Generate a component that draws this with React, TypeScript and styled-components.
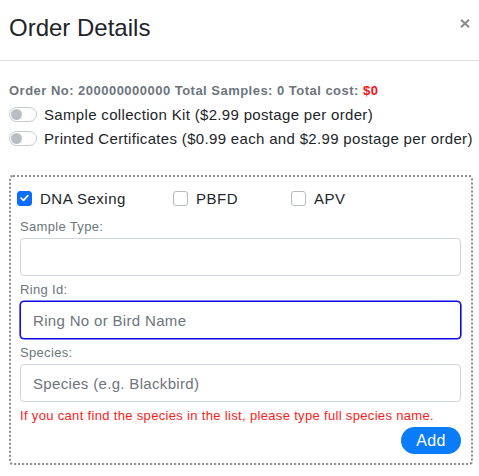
import styled, { createGlobalStyle } from "styled-components";

const GlobalStyle = createGlobalStyle`
    body {
        margin: 0;
        background: #fff;
        font-family: "Liberation Sans", Arial, sans-serif;
        color: #212529;
    }
`

const Modal = styled.div`
    width: 479px;
    background: #fff;
`

const Header = styled.div`
    box-sizing: border-box;
    height: 61px;
    padding: 13px 9px 0;
    border-bottom: 1px solid #dee2e6;
    display: flex;
    justify-content: space-between;
    align-items: flex-start;
`

const Title = styled.h4`
    margin: 0;
    font-size: 24px;
    font-weight: 400;
    line-height: 29px;
    color: #212529;
`

const CloseButton = styled.button`
    border: 0;
    background: none;
    padding: 0;
    margin: 5px 0 0;
    width: 11px;
    height: 10px;
    display: flex;
    align-items: center;
    justify-content: center;
    color: #8a8a8a;
`

const Body = styled.div`
    padding: 22px 6px 0 9px;
    letter-spacing: 0.33px;
`

const Summary = styled.div`
    font-size: 13px;
    line-height: 16px;
    font-weight: 700;
    letter-spacing: 0.48px;
    color: #6c757d;
    margin-bottom: 3px;
    white-space: nowrap;
`

const Cost = styled.span`
    color: #ff1010;
`

const SwitchRow = styled.label`
    display: flex;
    align-items: center;
    gap: 7px;
    height: 24px;
    font-size: 15px;
    color: #212529;
    white-space: nowrap;
`

const Switch = styled.span`
    box-sizing: border-box;
    position: relative;
    width: 28px;
    height: 15px;
    border: 1px solid #c4c8cc;
    border-radius: 8px;
    background: #fff;
    &::after {
        content: "";
        position: absolute;
        left: 1px;
        top: 1px;
        width: 11px;
        height: 11px;
        border-radius: 50%;
        background: #b8bec4;
    }
`

const SampleBox = styled.div`
    margin-top: 25px;
    box-sizing: border-box;
    width: 464px;
    border: 2px dotted #8a8a8a;
    border-radius: 4px;
    padding: 10px 10px 9px 9px;
`

const TestRow = styled.div`
    display: grid;
    grid-template-columns: 156px 118px auto;
    margin-left: -3px;
    height: 22px;
    align-items: center;
    margin-bottom: 10px;
`

const CheckOption = styled.label`
    display: flex;
    align-items: center;
    gap: 8px;
    font-size: 15px;
    letter-spacing: 0.5px;
    color: #212529;
`

const CheckBox = styled.span<{ $checked?: boolean }>`
    box-sizing: border-box;
    width: 15px;
    height: 15px;
    border-radius: 3px;
    border: 1px solid ${props => props.$checked ? "#0d6efd" : "#b5bbc1"};
    background: ${props => props.$checked ? "#0d6efd" : "#fff"};
    display: flex;
    align-items: center;
    justify-content: center;
`

const Field = styled.div`
    margin-bottom: 6px;
`

const FieldLabel = styled.div`
    font-size: 13px;
    line-height: 16px;
    color: #6c757d;
    margin-bottom: 3px;
`

const TextInput = styled.input<{ $focused?: boolean }>`
    box-sizing: border-box;
    display: block;
    width: 441px;
    height: 38px;
    padding: 0 12px;
    font-family: inherit;
    font-size: 15px;
    letter-spacing: 0.33px;
    color: #212529;
    border: 1px solid ${props => props.$focused ? "#0a0ae6" : "#ced4da"};
    box-shadow: ${props => props.$focused ? "0 0 0 0.6px #0a0ae6" : "none"};
    border-radius: 4px;
    outline: none;
    &::placeholder {
        color: #6c757d;
    }
`

const Hint = styled.div`
    font-size: 13px;
    line-height: 16px;
    color: #ff1a1a;
    margin-bottom: 3px;
    white-space: nowrap;
`

const Actions = styled.div`
    display: flex;
    justify-content: flex-end;
    width: 441px;
`

const AddButton = styled.button`
    width: 60px;
    height: 27px;
    border: 0;
    border-radius: 14px;
    background: #0a7cf7;
    color: #fff;
    font-family: inherit;
    font-size: 16px;
    letter-spacing: 0.3px;
    padding: 0;
`

export default function App() {
    const tests = [
        { name: "DNA Sexing", checked: true },
        { name: "PBFD", checked: false },
        { name: "APV", checked: false },
    ];

    return (
        <Modal>
            <GlobalStyle />
            <Header>
                <Title>Order Details</Title>
                <CloseButton aria-label="Close">
                    <svg width="10" height="9" viewBox="0 0 10 9">
                        <path d="M1 0.8L9 8.2M9 0.8L1 8.2" stroke="currentColor" strokeWidth="2" />
                    </svg>
                </CloseButton>
            </Header>
            <Body>
                <Summary>
                    Order No: 200000000000 Total Samples: 0 Total cost: <Cost>$0</Cost>
                </Summary>
                <SwitchRow>
                    <Switch />
                    Sample collection Kit ($2.99 postage per order)
                </SwitchRow>
                <SwitchRow>
                    <Switch />
                    Printed Certificates ($0.99 each and $2.99 postage per order)
                </SwitchRow>
                <SampleBox>
                    <TestRow>
                        {tests.map((test) => (
                            <CheckOption key={test.name}>
                                <CheckBox $checked={test.checked}>
                                    {test.checked && (
                                        <svg width="9" height="8" viewBox="0 0 9 8">
                                            <path d="M1.2 4.2L3.5 6.4L7.8 1.6" stroke="#fff" strokeWidth="1.7" fill="none" strokeLinecap="round" strokeLinejoin="round" />
                                        </svg>
                                    )}
                                </CheckBox>
                                {test.name}
                            </CheckOption>
                        ))}
                    </TestRow>
                    <Field>
                        <FieldLabel>Sample Type:</FieldLabel>
                        <TextInput readOnly />
                    </Field>
                    <Field>
                        <FieldLabel>Ring Id:</FieldLabel>
                        <TextInput $focused readOnly placeholder="Ring No or Bird Name" />
                    </Field>
                    <Field>
                        <FieldLabel>Species:</FieldLabel>
                        <TextInput readOnly placeholder="Species (e.g. Blackbird)" />
                    </Field>
                    <Hint>If you cant find the species in the list, please type full species name.</Hint>
                    <Actions>
                        <AddButton>Add</AddButton>
                    </Actions>
                </SampleBox>
            </Body>
        </Modal>
    );
}
